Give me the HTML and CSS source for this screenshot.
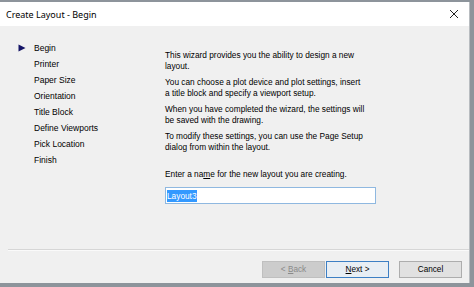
FILE: index.html
```html
<!DOCTYPE html>
<html>
<head>
<meta charset="utf-8">
<link rel="stylesheet" href="styles.css">
</head>
<body>
<div class="window">
  <div class="titlebar">
    <span class="title">Create Layout - Begin</span>
    <svg class="close" width="10" height="10" viewBox="0 0 10 10"><path d="M1 1L9 9M9 1L1 9" stroke="#222" stroke-width="1"/></svg>
  </div>
  <div class="body">
    <div class="content">
      <ul class="nav">
        <li class="active"><span class="marker"><svg width="8" height="8" viewBox="0 0 8 8"><path d="M0.5 0.5L7.5 4L0.5 7.5Z" fill="#141466"/></svg></span>Begin</li>
        <li><span class="marker"></span>Printer</li>
        <li><span class="marker"></span>Paper Size</li>
        <li><span class="marker"></span>Orientation</li>
        <li><span class="marker"></span>Title Block</li>
        <li><span class="marker"></span>Define Viewports</li>
        <li><span class="marker"></span>Pick Location</li>
        <li><span class="marker"></span>Finish</li>
      </ul>
      <div class="main">
        <p>This wizard provides you the ability to design a new<br>layout.</p>
        <p>You can choose a plot device and plot settings, insert<br>a title block and specify a viewport setup.</p>
        <p>When you have completed the wizard, the settings will<br>be saved with the drawing.</p>
        <p>To modify these settings, you can use the Page Setup<br>dialog from within the layout.</p>
        <p class="prompt">Enter a na<u>m</u>e for the new layout you are creating.</p>
        <div class="input"><span class="sel">Layout3</span></div>
      </div>
    </div>
    <div class="sep"></div>
    <div class="buttons">
      <button class="btn disabled">&lt; <u>B</u>ack</button>
      <button class="btn default"><u>N</u>ext &gt;</button>
      <button class="btn cancel">Cancel</button>
    </div>
  </div>
</div>
</body>
</html>
```
FILE: styles.css
```css
html, body {
  margin: 0;
  padding: 0;
}
body {
  width: 474px;
  height: 287px;
  background: #8d949b;
  overflow: hidden;
}
.window {
  margin-top: 2px;
  width: 469px;
  height: 281px;
  background: #f0f0f0;
  border-right: 1px solid #b8bcc0;
  display: flex;
  flex-direction: column;
}
.titlebar {
  height: 24px;
  background: #ffffff;
  display: flex;
  align-items: center;
  justify-content: space-between;
  padding: 0 10px 0 6px;
}
.title {
  font-family: "Noto Sans", "DejaVu Sans", sans-serif;
  font-size: 9px;
  color: #000;
}
.close {
  display: block;
}
.body {
  flex: 1;
  display: flex;
  flex-direction: column;
  font-family: "Liberation Sans", Arial, sans-serif;
  color: #000;
}
.content {
  height: 223px;
  display: flex;
}
.nav {
  list-style: none;
  margin: 0;
  padding: 14px 0 0 18px;
  width: 147px;
  font-size: 8.5px;
}
.nav li {
  height: 16px;
  display: flex;
  align-items: center;
}
.marker {
  width: 16px;
  display: flex;
  align-items: center;
}
.main {
  padding-top: 24px;
  font-size: 8.3px;
  line-height: 11px;
  white-space: nowrap;
}
.main p {
  margin: 0 0 5px 0;
}
.main p.prompt {
  margin-top: 16px;
  margin-bottom: 7px;
}
.input {
  width: 208px;
  height: 15px;
  border: 1px solid #8fb8e0;
  background: #fff;
  display: flex;
  align-items: center;
  padding-left: 1px;
}
.sel {
  background: #3399ff;
  color: #fff;
  line-height: 12px;
}
.sep {
  margin-left: 8px;
  height: 1px;
  background: #d6d6d6;
  border-bottom: 1px solid #fafafa;
}
.buttons {
  margin-top: 10px;
  display: flex;
  justify-content: flex-end;
  padding-right: 7px;
}
.btn {
  width: 63px;
  height: 17px;
  margin: 0;
  padding: 0;
  font-family: "Liberation Sans", Arial, sans-serif;
  font-size: 8.2px;
  background: #e1e1e1;
  border: 1px solid #adadad;
  color: #000;
}
.btn.disabled {
  background: #cccccc;
  border-color: #bfbfbf;
  color: #8a8a8a;
}
.btn.default {
  margin-left: 1px;
  border-color: #3d7fc4;
  background: #e8eef4;
}
.btn.cancel {
  margin-left: 10px;
}
```
